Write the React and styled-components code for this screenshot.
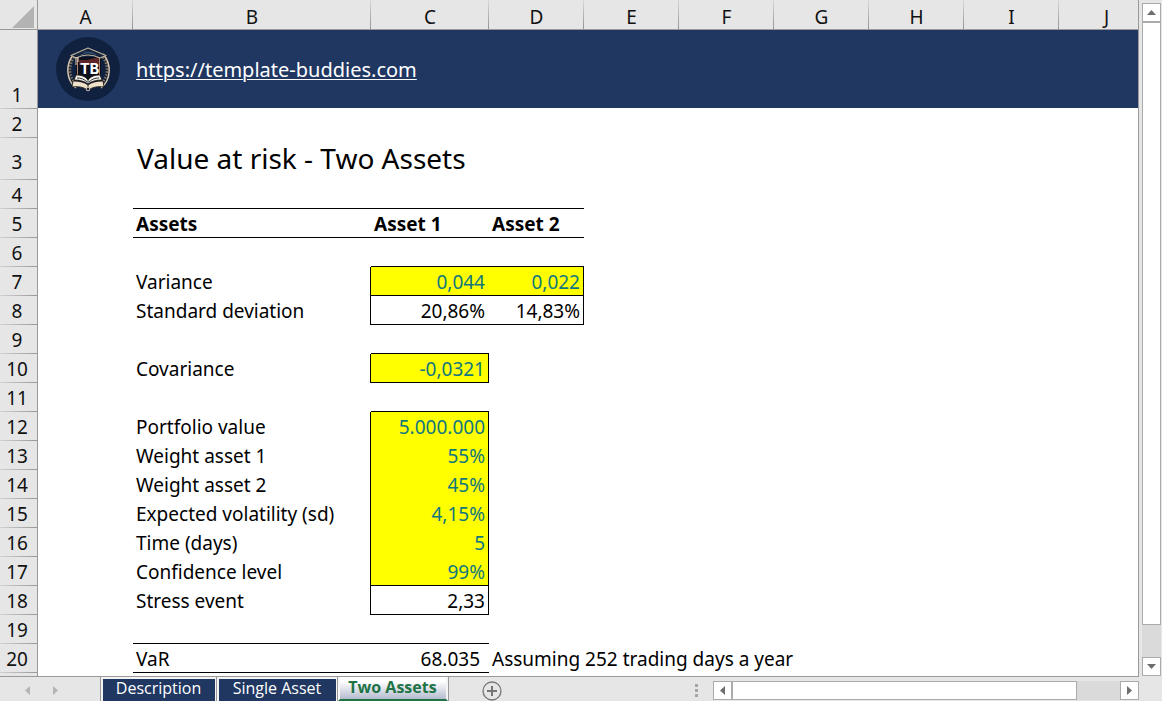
import React from "react";
import styled, { createGlobalStyle } from "styled-components";

const GlobalStyle = createGlobalStyle`
  * { box-sizing: border-box; }
  body {
    margin: 0;
    background: #e6e6e6;
    font-family: "Noto Sans", "Liberation Sans", sans-serif;
    font-variant-ligatures: none;
  }
  button { padding: 0; font: inherit; }
`;

const NAVY = "#203762";
const LINE = "#999999";

const Workbook = styled.div`
  height: 100vh;
  display: flex;
  flex-direction: column;
  overflow: hidden;
`;

const Body = styled.div`
  flex: 1;
  min-height: 0;
  display: flex;
`;

const Grid = styled.main`
  flex: 1;
  min-width: 0;
  overflow: hidden;
  background: #ffffff;
  border-right: 1px solid ${LINE};
`;

const Sheet = styled.table`
  width: 100%;
  min-width: 1154px;
  table-layout: fixed;
  border-collapse: separate;
  border-spacing: 0;
  font-size: 19px;
  line-height: 28px;
`;

const Col = styled.col`
  width: ${(p) => p.$w};
`;

const Corner = styled.td`
  height: 30px;
  padding: 5px 3px 0 0;
  background: #e6e6e6;
  border-right: 1px solid ${LINE};
  border-bottom: 1px solid ${LINE};
  svg { display: block; margin-left: auto; }
`;

const ColumnHead = styled.th`
  height: 30px;
  padding: 5px 0 0;
  font-weight: 400;
  line-height: 24px;
  color: #111111;
  border-bottom: 1px solid ${LINE};
  background:
    linear-gradient(to bottom, #d8d8d8, #929292) right / 1px 100% no-repeat,
    #e6e6e6;
`;

const RowHead = styled.th`
  height: ${(p) => p.$h}px;
  padding: 0 3px ${(p) => (p.$lift ? 4 : 0)}px 0;
  font-weight: 400;
  vertical-align: bottom;
  color: #111111;
  border-right: 1px solid ${LINE};
  background:
    linear-gradient(to right, #d0d0d0, #999999) bottom / 100% 1px no-repeat,
    #e6e6e6;
`;

const Cell = styled.td`
  padding: ${(p) => (p.$indent ? "1px 9px 0 3px" : "1px 4px 0 3px")};
  white-space: nowrap;
  text-align: ${(p) => (p.$right ? "right" : "left")};
  font-weight: ${(p) => (p.$bold ? 700 : 400)};
  color: ${(p) => (p.$input ? "#12777f" : "#000000")};
  background:
    linear-gradient(${(p) => (p.$edge ? "#000000, #000000" : "transparent, transparent")}) right / 1px 100% no-repeat,
    linear-gradient(${(p) => (p.$rule ? "#000000, #000000" : "transparent, transparent")}) bottom / 100% 1px no-repeat,
    ${(p) => (p.$input ? "#ffff00" : "transparent")};
`;

const TitleCell = styled(Cell)`
  padding: 0 4px 2px;
  font-size: 28px;
  line-height: 40px;
  h1 { margin: 0; font: inherit; }
`;

const Banner = styled.td`
  padding: ${(p) => (p.$logo ? "0 0 0 18px" : "1px 3px 0")};
  background: ${NAVY};
  background-clip: padding-box;
  border-bottom: 1px solid transparent;
  svg { display: block; }
`;

const SiteLink = styled.a`
  color: #ffffff;
  font-size: 20px;
  text-decoration: underline;
  text-decoration-thickness: 1px;
  text-underline-offset: 2px;
`;

const VerticalBar = styled.div`
  width: 23px;
  padding: 3px 1px 0 3px;
  display: flex;
  flex-direction: column;
  background: #e6e6e6;
`;

const ScrollButton = styled.button`
  width: 19px;
  height: 19px;
  flex: none;
  display: flex;
  align-items: center;
  justify-content: center;
  background: #ffffff;
  border: 1px solid #ababab;
`;

const Track = styled.div`
  flex: 1;
  min-width: 0;
  min-height: 0;
  display: flex;
  flex-direction: ${(p) => (p.$vertical ? "column" : "row")};
  background: #dadada;
`;

const Thumb = styled.div`
  flex: 0 0 ${(p) => p.$size};
  background: #ffffff;
  border: 1px solid #ababab;
`;

const BottomBar = styled.footer`
  height: 25px;
  flex: none;
  display: flex;
  background: #e6e6e6;
`;

const BottomMain = styled.div`
  flex: 1;
  min-width: 0;
  display: flex;
  justify-content: space-between;
  border-top: 1px solid ${LINE};
`;

const Tabs = styled.nav`
  display: flex;
  align-items: stretch;
`;

const Arrows = styled.div`
  width: 101px;
  padding: 3px 0 0 18px;
  display: flex;
  align-items: center;
  gap: 10px;
`;

const ArrowButton = styled.button`
  width: 18px;
  height: 18px;
  display: flex;
  align-items: center;
  justify-content: center;
  background: none;
  border: 0;
`;

const Tab = styled.button`
  width: ${(p) => p.$w}px;
  padding: 0 1px ${(p) => (p.$active ? 2 : 6)}px 0;
  font-family: "Open Sans", "Noto Sans", sans-serif;
  font-size: 16px;
  line-height: 18px;
  font-weight: ${(p) => (p.$active ? 700 : 400)};
  color: ${(p) => (p.$active ? "#217346" : "#ffffff")};
  white-space: nowrap;
  background: ${(p) => (p.$active ? "linear-gradient(#ffffff 20%, #b4bbce)" : NAVY)};
  background-clip: padding-box;
  border: solid #f4f4f4;
  border-width: ${(p) => (p.$active ? "0 2px 2px" : "2px 2px 0")};
  border-bottom-color: #217346;
  box-shadow: -1px 0 ${LINE}, 1px 0 ${(p) => (p.$active ? LINE : "transparent")};
`;

const AddButton = styled.button`
  width: 20px;
  margin: 4px 0 0 34px;
  background: none;
  border: 0;
  svg { display: block; }
`;

const HorizontalBar = styled.div`
  width: 445px;
  padding: 4px 0 0;
  display: flex;
  align-items: flex-start;
`;

const Grip = styled.div`
  width: 19px;
  height: 19px;
  padding-left: 1px;
  display: flex;
  align-items: center;
`;

const Filler = styled.div`
  width: 23px;
`;

const HTrack = styled(Track)`
  height: 19px;
`;

const triangles = {
  up: "M0 5h9L4.500 0z",
  down: "M0 0h9L4.500 5z",
  left: "M5 0v9L0 4.500z",
  right: "M0 0v9L5 4.500z",
};

function Triangle({ dir, color = "#6e6e6e" }) {
  const flat = dir === "up" || dir === "down";
  return (
    <svg width={flat ? 9 : 5} height={flat ? 5 : 9} aria-hidden="true">
      <path d={triangles[dir]} fill={color} />
    </svg>
  );
}

function Logo() {
  return (
    <svg width="64" height="64" viewBox="0 0 64 64" role="img" aria-label="Template Buddies">
      <circle cx="32" cy="32" r="32" fill="#10213f" />
      <path d="M18 17C9 27 10 43 20 51M47 17C56 27 55 43 45 51" fill="none" stroke="#d9c6ad" strokeWidth="1.500" />
      <path d="M18 20C12 29 13 40 20 47M47 20C53 29 52 40 45 47" fill="none" stroke="#85785e" strokeWidth="2.500" strokeDasharray="1.500 1.500" />
      <path d="M20 20h25v24H20z" fill="#0b101c" />
      <path d="M31 23l12-3v8H23v-5z" fill="#5c2529" />
      <path d="M43.500 21v21M21.500 20v21" stroke="#b08a72" strokeWidth="1" />
      <path d="M15 18.500L32 11l18 7.500-6 2.500c-8-4-16-4-24 0z" fill="#17243b" stroke="#bdb29f" strokeWidth="1.200" strokeLinejoin="round" />
      <path d="M25 18c5-3 10-3 15 0M28 15l9 1" fill="none" stroke="#345577" />
      <path d="M20 20v8M22 20v5" stroke="#ead9bd" strokeWidth="1" />
      <text x="33.500" y="37" textAnchor="middle" fontFamily="Liberation Mono, monospace" fontSize="16" fontWeight="700" fill="#ffffff">TB</text>
      <path d="M20 38c5 0 9 1 12 5 3-4 7-5 12-5l2 5c-6 0-10 1-14 4-4-3-8-4-14-4z" fill="#f4f0e8" stroke="#17130f" strokeWidth="0.800" />
      <path d="M17 44c6 0 11 1 15 4 4-3 9-4 15-4l1 6c-6-1-11 0-16 3-5-3-10-4-16-3z" fill="#efe1ca" stroke="#17130f" strokeWidth="0.800" />
      <path d="M32 43v9M21 41c4 0 7 1 10 4M43 41c-4 0-7 1-10 4" fill="none" stroke="#18202d" strokeWidth="0.900" />
      <circle cx="32" cy="52" r="1.800" fill="#10213f" stroke="#d9c6ad" />
    </svg>
  );
}

const columns = ["A", "B", "C", "D", "E", "F", "G", "H", "I", "J"];
const widths = ["38px", "95px", "238px", "118px", "95px", "95px", "95px", "95px", "95px", "95px", "auto"];

const rows = [
  { n: 4, rule: 3 },
  { n: 5, rule: 3, bold: true, b: "Assets", c: { t: "Asset 1" }, d: { t: "Asset 2" } },
  { n: 6, boxTop: 2 },
  { n: 7, b: "Variance", box: true, c: { t: "0,044", input: true, rule: true }, d: { t: "0,022", input: true, rule: true, edge: true } },
  { n: 8, b: "Standard deviation", box: true, c: { t: "20,86%", right: true, rule: true }, d: { t: "14,83%", right: true, rule: true, edge: true } },
  { n: 9, boxTop: 1 },
  { n: 10, b: "Covariance", box: true, c: { t: "-0,0321", input: true, rule: true, edge: true } },
  { n: 11, boxTop: 1 },
  { n: 12, b: "Portfolio value", box: true, c: { t: "5.000.000", input: true, edge: true } },
  { n: 13, b: "Weight asset 1", box: true, c: { t: "55%", input: true, edge: true } },
  { n: 14, b: "Weight asset 2", box: true, c: { t: "45%", input: true, edge: true } },
  { n: 15, b: "Expected volatility (sd)", box: true, c: { t: "4,15%", input: true, edge: true } },
  { n: 16, b: "Time (days)", box: true, c: { t: "5", input: true, edge: true } },
  { n: 17, b: "Confidence level", box: true, c: { t: "99%", input: true, edge: true, rule: true } },
  { n: 18, b: "Stress event", box: true, c: { t: "2,33", right: true, edge: true, rule: true } },
  { n: 19, rule: 2 },
  { n: 20, rule: 2, b: "VaR", c: { t: "68.035", right: true, indent: true }, d: { t: "Assuming 252 trading days a year" } },
];

function ValueCell({ cell = {}, bold, rule }) {
  return (
    <Cell
      $bold={bold}
      $input={cell.input}
      $right={cell.right || cell.input}
      $indent={cell.indent}
      $edge={cell.edge}
      $rule={cell.rule || rule}
    >
      {cell.t}
    </Cell>
  );
}

function SheetRow({ row }) {
  const { n, b, c, d, bold, box, rule = 0, boxTop = 0 } = row;
  return (
    <tr>
      <RowHead scope="row" $h={29}>{n}</RowHead>
      <Cell />
      <Cell $bold={bold} $edge={box} $rule={rule > 0}>{b}</Cell>
      <ValueCell cell={c} bold={bold} rule={rule > 1 || boxTop > 0} />
      <ValueCell cell={d} bold={bold} rule={rule > 2 || boxTop > 1} />
      <Cell colSpan={6} />
    </tr>
  );
}

export default function App() {
  return (
    <Workbook>
      <GlobalStyle />
      <Body>
        <Grid>
          <Sheet>
            <colgroup>
              {widths.map((w, i) => <Col key={i} $w={w} />)}
            </colgroup>
            <thead>
              <tr>
                <Corner>
                  <svg width="22" height="22" aria-hidden="true">
                    <path d="M22 0v22H0z" fill="#b3b3b3" />
                  </svg>
                </Corner>
                {columns.map((name) => <ColumnHead key={name} scope="col">{name}</ColumnHead>)}
              </tr>
            </thead>
            <tbody>
              <tr>
                <RowHead scope="row" $h={79}>1</RowHead>
                <Banner $logo><Logo /></Banner>
                <Banner colSpan={9}>
                  <SiteLink href="https://template-buddies.com">https://template-buddies.com</SiteLink>
                </Banner>
              </tr>
              <tr>
                <RowHead scope="row" $h={29}>2</RowHead>
                <Cell colSpan={10} />
              </tr>
              <tr>
                <RowHead scope="row" $h={42} $lift>3</RowHead>
                <Cell />
                <TitleCell colSpan={9}><h1>Value at risk - Two Assets</h1></TitleCell>
              </tr>
              {rows.map((row) => <SheetRow key={row.n} row={row} />)}
              <tr>
                <RowHead $h={29} />
                <Cell colSpan={10} />
              </tr>
            </tbody>
          </Sheet>
        </Grid>
        <VerticalBar>
          <ScrollButton aria-label="Scroll up"><Triangle dir="up" /></ScrollButton>
          <Track $vertical><Thumb $size="95%" /></Track>
          <ScrollButton aria-label="Scroll down"><Triangle dir="down" /></ScrollButton>
        </VerticalBar>
      </Body>
      <BottomBar>
        <BottomMain>
          <Tabs aria-label="Sheets">
            <Arrows>
              <ArrowButton aria-label="Previous sheet"><Triangle dir="left" color="#b5b5b5" /></ArrowButton>
              <ArrowButton aria-label="Next sheet"><Triangle dir="right" color="#b5b5b5" /></ArrowButton>
            </Arrows>
            <Tab $w={116}>Description</Tab>
            <Tab $w={121}>Single Asset</Tab>
            <Tab $w={110} $active aria-current="page">Two Assets</Tab>
            <AddButton aria-label="New sheet">
              <svg width="20" height="20" fill="none" stroke="#767676">
                <circle cx="10" cy="10" r="9" strokeWidth="1.300" />
                <path d="M10 5v10M5 10h10" strokeWidth="2" />
              </svg>
            </AddButton>
          </Tabs>
          <HorizontalBar>
            <Grip>
              <svg width="3" height="13" fill="#a6a6a6" aria-hidden="true">
                <path d="M0 0h3v3H0zM0 5h3v3H0zM0 10h3v3H0z" />
              </svg>
            </Grip>
            <ScrollButton aria-label="Scroll left"><Triangle dir="left" /></ScrollButton>
            <HTrack><Thumb $size="89%" /></HTrack>
            <ScrollButton aria-label="Scroll right"><Triangle dir="right" /></ScrollButton>
          </HorizontalBar>
        </BottomMain>
        <Filler />
      </BottomBar>
    </Workbook>
  );
}
